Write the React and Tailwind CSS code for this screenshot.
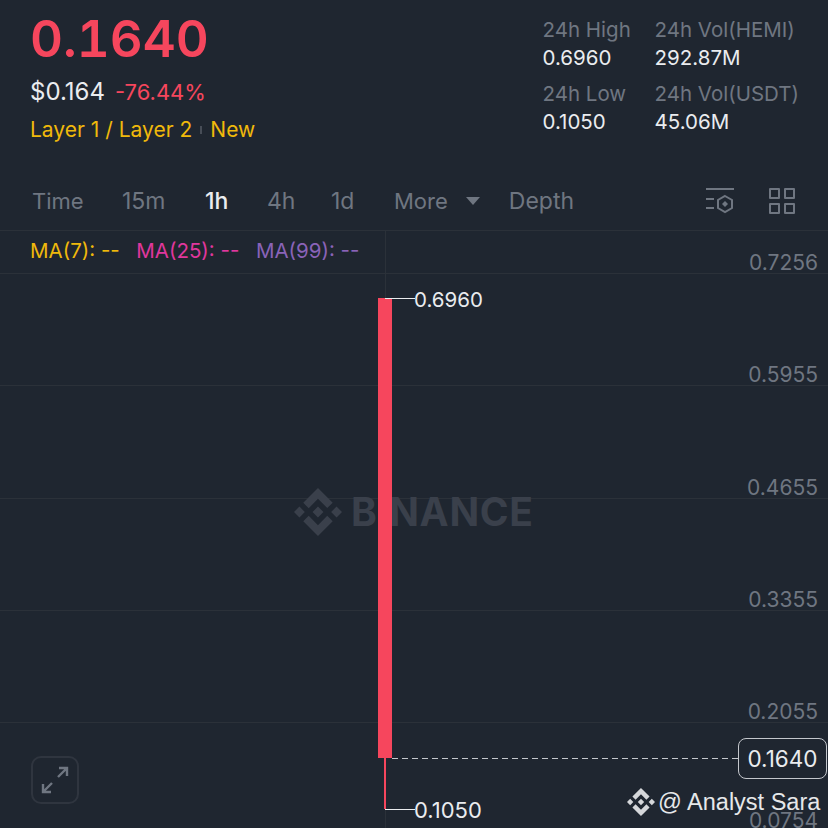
const binancePath =
  "M16.624 13.9202l2.7175 2.7154-7.353 7.353-7.353-7.352 2.7175-2.7164 4.6355 4.6595 4.6356-4.6595zm4.6366-4.6366L24 12l-2.7154 2.7164L18.5682 12l2.6924-2.7164zm-9.272.001l2.7163 2.6914-2.7164 2.7174v-.001L9.2721 12l2.7164-2.7154zm-9.2722-.001L5.4088 12l-2.6914 2.6924L0 12l2.7164-2.7164zM11.9885.0115l7.353 7.329-2.7174 2.7154-4.6356-4.6356-4.6355 4.6595-2.7174-2.7154 7.353-7.353z";

function BinanceMark({ className }) {
  return (
    <svg viewBox="0 0 24 24" className={className} fill="currentColor">
      <path d={binancePath} />
    </svg>
  );
}

function Stat({ label, value }) {
  return (
    <div>
      <div className="text-[20.5px] leading-[28px] text-[#6f7681]">{label}</div>
      <div className="text-[20.5px] leading-[28px] text-[#eaecef]">{value}</div>
    </div>
  );
}

function Header() {
  return (
    <div className="flex h-[174px] justify-between pl-[30px] pr-[29px]">
      <div>
        <div className="mt-[10px] text-[51px] font-semibold leading-[58px] text-[#f6465d] tabular-nums">0.1640</div>
        <div className="mt-[9px] flex items-baseline gap-[10px] leading-[30px]">
          <span className="text-[24px] text-[#eaecef]">$0.164</span>
          <span className="text-[22px] text-[#f6465d]">-76.44%</span>
        </div>
        <div className="mt-[9px] flex items-center text-[21px] leading-[28px] text-[#f0b90b]">
          <span>Layer 1 / Layer 2</span>
          <span className="mx-[8px] h-[8px] w-[2px] bg-[#474d57]" />
          <span>New</span>
        </div>
      </div>
      <div className="mt-[16px] flex">
        <div className="flex w-[112px] flex-col gap-[8px]">
          <Stat label="24h High" value="0.6960" />
          <Stat label="24h Low" value="0.1050" />
        </div>
        <div className="flex flex-col gap-[8px]">
          <Stat label="24h Vol(HEMI)" value="292.87M" />
          <Stat label="24h Vol(USDT)" value="45.06M" />
        </div>
      </div>
    </div>
  );
}

function Toolbar() {
  return (
    <div className="flex h-[57px] items-center border-b border-[#2b3139] pl-[32px] pr-[33px] pb-[2px] text-[23px] text-[#6f7681]">
      <span className="w-[90px] text-[22px]">Time</span>
      <span className="w-[83px]">15m</span>
      <span className="w-[62px] font-medium text-[#eaecef]">1h</span>
      <span className="w-[64px]">4h</span>
      <span className="w-[63px]">1d</span>
      <span className="text-[22px]">More</span>
      <span className="ml-[18px] h-0 w-0 border-x-[7px] border-t-[8px] border-x-transparent border-t-[#6f7681]" />
      <span className="ml-[29px]">Depth</span>
      <svg viewBox="0 0 28 26" className="ml-auto h-[26px] w-[28px] text-[#6f7681]" fill="none" stroke="currentColor" strokeWidth="2">
        <path d="M0 1h28M0 11h8M0 20h8" />
        <path d="M19 8l7 4v8l-7 4-7-4v-8z" />
        <path d="M19 13l3 3-3 3-3-3z" fill="currentColor" stroke="none" />
      </svg>
      <div className="ml-[35px] grid grid-cols-2 gap-[4px]">
        <span className="h-[11px] w-[11px] rounded-[1px] border-2 border-[#6f7681]" />
        <span className="h-[11px] w-[11px] rounded-[1px] border-2 border-[#6f7681]" />
        <span className="h-[11px] w-[11px] rounded-[1px] border-2 border-[#6f7681]" />
        <span className="h-[11px] w-[11px] rounded-[1px] border-2 border-[#6f7681]" />
      </div>
    </div>
  );
}

const gridLines = [
  { y: 42, price: "0.7256" },
  { y: 154, price: "0.5955" },
  { y: 267, price: "0.4655" },
  { y: 379, price: "0.3355" },
  { y: 491, price: "0.2055" },
];

// chart area starts at y=231 in the page, everything inside sits on the price scale
function Chart() {
  return (
    <div className="relative h-[597px] overflow-hidden">
      <div className="absolute left-[385px] top-0 h-full w-px bg-[#2b3139]" />
      {gridLines.map((g) => (
        <div key={g.price}>
          <div className="absolute left-0 h-px w-full bg-[#2b3139]" style={{ top: g.y }} />
          <div className="absolute right-[10px] text-[21px] leading-[26px] text-[#6f7681]" style={{ top: g.y - 23 }}>
            {g.price}
          </div>
        </div>
      ))}
      <div className="absolute right-[10px] top-[577px] text-[21px] leading-[26px] text-[#6f7681]">0.0754</div>

      <div className="absolute left-[30px] top-[5px] flex gap-[16.5px] text-[20.5px] leading-[30px]">
        <span className="text-[#f0b90b]">MA(7): --</span>
        <span className="text-[#e0379d]">MA(25): --</span>
        <span className="text-[#8a63b8]">MA(99): --</span>
      </div>

      <div className="absolute left-[294px] top-[257px] flex items-center text-[#3a404b]">
        <BinanceMark className="h-[48px] w-[48px]" />
        <span className="ml-[9px] text-[39px] font-bold leading-[48px] tracking-[0.7px]">BINANCE</span>
      </div>

      <div className="absolute left-[378px] top-[67px] h-[460px] w-[14px] bg-[#f6465d]" />
      <div className="absolute left-[384px] top-[527px] h-[51px] w-[2px] bg-[#f6465d]" />
      <div className="absolute left-[385px] top-[67px] h-px w-[30px] bg-[#eaecef]" />
      <div className="absolute left-[385px] top-[578px] h-px w-[30px] bg-[#eaecef]" />
      <div className="absolute left-[414px] top-[56px] text-[20.5px] leading-[26px] text-[#eaecef]">0.6960</div>
      <div className="absolute left-[414px] top-[566px] text-[22px] leading-[26px] text-[#eaecef]">0.1050</div>

      <div className="absolute left-[392px] top-[527px] h-px w-[346px] bg-[repeating-linear-gradient(90deg,#c4c7cc_0_6px,transparent_6px_10px)]" />
      <div className="absolute left-[738px] top-[507px] flex h-[41px] w-[89px] items-center justify-center rounded-[8px] border border-[#c4c7cc] bg-[#1f2630] text-[22.5px] text-[#eaecef]">
        0.1640
      </div>

      <div className="absolute left-[31px] top-[525px] flex h-[48px] w-[48px] items-center justify-center rounded-[10px] border-2 border-[#2f353f] text-[#6f7681]">
        <svg viewBox="0 0 32 32" className="h-[32px] w-[32px]" fill="none" stroke="currentColor" strokeWidth="2.4">
          <path d="M19 13l9-9M20 4h8v8M13 19l-9 9M4 20v8h8" />
        </svg>
      </div>

      <div className="absolute left-[627px] top-[556px] flex items-center text-[#e6e8ea]">
        <BinanceMark className="h-[28px] w-[28px] text-[#d5d7da]" />
        <span className="ml-[3px] font-['Liberation_Sans',sans-serif] text-[23.5px] leading-[30px]">@ Analyst Sara</span>
      </div>
    </div>
  );
}

export default function App() {
  return (
    <div className="h-[828px] w-[828px] overflow-hidden bg-[#1f2630] font-['Inter',sans-serif]">
      <Header />
      <Toolbar />
      <Chart />
    </div>
  );
}
